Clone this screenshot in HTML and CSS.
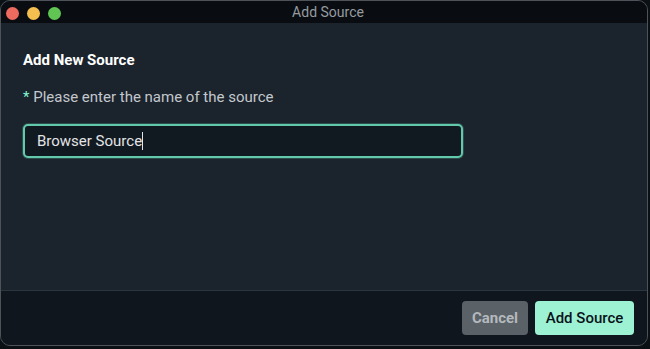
FILE: index.html
```html
<!DOCTYPE html>
<html>
<head>
<meta charset="utf-8">
<link rel="stylesheet" href="styles.css">
</head>
<body>
<div class="window">
  <div class="titlebar">
    <div class="lights">
      <span class="light red"></span>
      <span class="light yellow"></span>
      <span class="light green"></span>
    </div>
    <div class="title">Add Source</div>
  </div>
  <div class="content">
    <h1 class="heading">Add New Source</h1>
    <div class="label"><span class="req">*</span> Please enter the name of the source</div>
    <div class="input"><span class="value">Browser Source</span><span class="caret"></span></div>
  </div>
  <div class="footer">
    <button class="btn cancel">Cancel</button>
    <button class="btn primary">Add Source</button>
  </div>
</div>
</body>
</html>
```

FILE: styles.css
```css
html, body {
  margin: 0;
  padding: 0;
  background: #0b1014;
  width: 650px;
  height: 349px;
  overflow: hidden;
  font-family: Roboto, "Liberation Sans", sans-serif;
}
.window {
  width: 646px;
  height: 344px;
  border: 1px solid #4d5359;
  border-radius: 10px;
  overflow: hidden;
  display: flex;
  flex-direction: column;
  background: #1b232c;
}
.titlebar {
  height: 22px;
  background: #090d11;
  position: relative;
  display: flex;
  align-items: center;
  justify-content: center;
  flex-shrink: 0;
}
.lights {
  position: absolute;
  left: 5px;
  top: 6px;
  display: flex;
  gap: 8px;
}
.light {
  width: 13px;
  height: 13px;
  border-radius: 50%;
  display: block;
}
.red { background: #ec6a5e; }
.yellow { background: #f4bf4f; }
.green { background: #61c554; }
.title {
  color: #969ba0;
  font-size: 14px;
  line-height: 22px;
  padding-left: 8px;
}
.content {
  flex: 1;
  padding: 28px 0 0 22px;
}
.heading {
  margin: 0;
  font-size: 15px;
  font-weight: 700;
  color: #ffffff;
  line-height: 18px;
}
.label {
  margin-top: 19px;
  font-size: 15px;
  color: #c3c8cc;
  line-height: 18px;
}
.req {
  color: #80f5d2;
}
.input {
  margin-top: 18px;
  width: 424px;
  height: 30px;
  border: 2px solid #63c9ab;
  border-radius: 5px;
  box-shadow: 0 0 0 1px rgba(99, 201, 171, 0.25);
  background: #121a21;
  display: flex;
  align-items: center;
  padding-left: 12px;
  box-sizing: content-box;
}
.value {
  font-size: 15px;
  color: #e2e4e6;
}
.caret {
  display: inline-block;
  width: 1px;
  height: 18px;
  background: #e2e4e6;
}
.footer {
  height: 54px;
  border-top: 1px solid #2b3540;
  background: #0f161d;
  display: flex;
  justify-content: flex-end;
  align-items: center;
  gap: 7px;
  padding-right: 13px;
  flex-shrink: 0;
}
.btn {
  height: 34px;
  border: none;
  border-radius: 4px;
  font-family: Roboto, "Liberation Sans", sans-serif;
  font-size: 15px;
  padding: 0;
}
.cancel {
  width: 66px;
  background: #5a6167;
  color: #b4b9bd;
  font-weight: 700;
}
.primary {
  width: 99px;
  background: #9ef2d4;
  color: #09121a;
  font-weight: 500;
}
```
